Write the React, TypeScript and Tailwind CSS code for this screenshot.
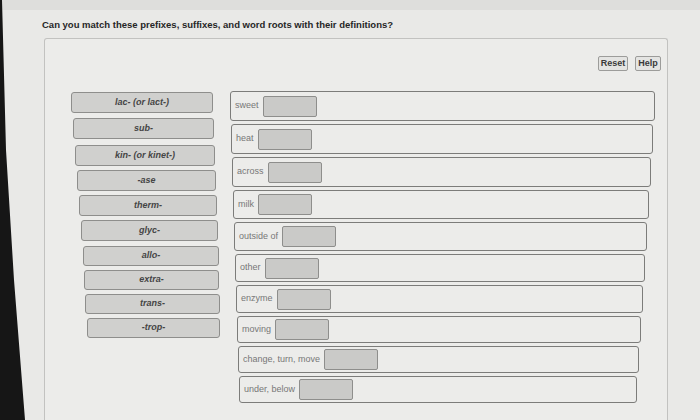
import React from "react";

type Tile = { label: string; cls: string };
type Target = { label: string; cls: string };

// the photo leans a little, so each row carries its own offset
const TILES: Tile[] = [
  { label: "lac- (or lact-)", cls: "ml-[26px] w-[142px] h-[21px]" },
  { label: "sub-", cls: "ml-[28px] w-[141px] h-[21px] mt-[5px]" },
  { label: "kin- (or kinet-)", cls: "ml-[30px] w-[140px] h-[21px] mt-[6px]" },
  { label: "-ase", cls: "ml-[32px] w-[139px] h-[21px] mt-[4px]" },
  { label: "therm-", cls: "ml-[34px] w-[138px] h-[21px] mt-[4px]" },
  { label: "glyc-", cls: "ml-[36px] w-[137px] h-[21px] mt-[4px]" },
  { label: "allo-", cls: "ml-[38px] w-[136px] h-[20px] mt-[5px]" },
  { label: "extra-", cls: "ml-[39px] w-[135px] h-[20px] mt-[4px]" },
  { label: "trans-", cls: "ml-[40px] w-[135px] h-[20px] mt-[4px]" },
  { label: "-trop-", cls: "ml-[42px] w-[133px] h-[20px] mt-[4px]" },
];

const TARGETS: Target[] = [
  { label: "sweet", cls: "ml-0 w-[425px] h-[30px]" },
  { label: "heat", cls: "ml-[1px] w-[422px] h-[30px] mt-[3px]" },
  { label: "across", cls: "ml-[2px] w-[419px] h-[30px] mt-[3px]" },
  { label: "milk", cls: "ml-[3px] w-[416px] h-[29px] mt-[3px]" },
  { label: "outside of", cls: "ml-[4px] w-[413px] h-[29px] mt-[3px]" },
  { label: "other", cls: "ml-[5px] w-[410px] h-[28px] mt-[3px]" },
  { label: "enzyme", cls: "ml-[6px] w-[407px] h-[28px] mt-[3px]" },
  { label: "moving", cls: "ml-[7px] w-[404px] h-[27px] mt-[3px]" },
  { label: "change, turn, move", cls: "ml-[8px] w-[401px] h-[27px] mt-[3px]" },
  { label: "under, below", cls: "ml-[9px] w-[398px] h-[27px] mt-[3px]" },
];

export default function App() {
  return (
    <div className="flex h-[420px] w-[700px] overflow-hidden bg-[#e9e9e7] font-['Liberation_Sans',Arial,sans-serif]">
      <svg width="25" height="420" className="shrink-0">
        <rect width="25" height="420" fill="#e9e9e7" />
        <rect width="25" height="10" fill="#dededc" />
        <polygon points="0,0 2,0 6,150 14,280 25,420 0,420" fill="#161616" />
      </svg>

      <div className="flex flex-1 flex-col">
        <div className="h-[10px] bg-[#dededc]" />
        <p className="mt-[9px] pl-[17px] text-[9.5px] font-bold leading-[11px] text-[#262626]">
          Can you match these prefixes, suffixes, and word roots with their definitions?
        </p>

        <div className="ml-[19px] mt-[8px] w-[624px] flex-1 rounded-tl-[3px] rounded-tr-[3px] border border-b-0 border-[#c2c2c0] bg-[#ececea]">
          <div className="flex justify-end gap-[7px] pr-[6px] pt-[17px]">
            <button
              type="button"
              className="h-[15px] w-[30px] rounded-[2px] border border-[#9c9c9a] bg-[#e4e4e2] text-[9px] font-bold leading-[13px] text-[#3a3a3a]"
            >
              Reset
            </button>
            <button
              type="button"
              className="h-[15px] w-[26px] rounded-[2px] border border-[#9c9c9a] bg-[#e4e4e2] text-[9px] font-bold leading-[13px] text-[#3a3a3a]"
            >
              Help
            </button>
          </div>

          <div className="mt-[20px] flex">
            <div className="flex w-[185px] shrink-0 flex-col pt-[1px]">
              {TILES.map((tile) => (
                <div
                  key={tile.label}
                  className={`${tile.cls} flex items-center justify-center rounded-[3px] border border-[#8e8e8c] bg-[#d0d0ce] text-[9px] font-semibold italic text-[#454545]`}
                >
                  {tile.label}
                </div>
              ))}
            </div>

            <div className="flex flex-col">
              {TARGETS.map((target) => (
                <div
                  key={target.label}
                  className={`${target.cls} flex items-center gap-[4px] rounded-[3px] border-[1.5px] border-[#7c7c7a] bg-[#ececea] pl-[4px]`}
                >
                  <span className="text-[9px] text-[#777]">{target.label}</span>
                  <span className="h-[21px] w-[54px] rounded-[2px] border border-[#8e8e8c] bg-[#cacac8]" />
                </div>
              ))}
            </div>
          </div>
        </div>
      </div>
    </div>
  );
}
